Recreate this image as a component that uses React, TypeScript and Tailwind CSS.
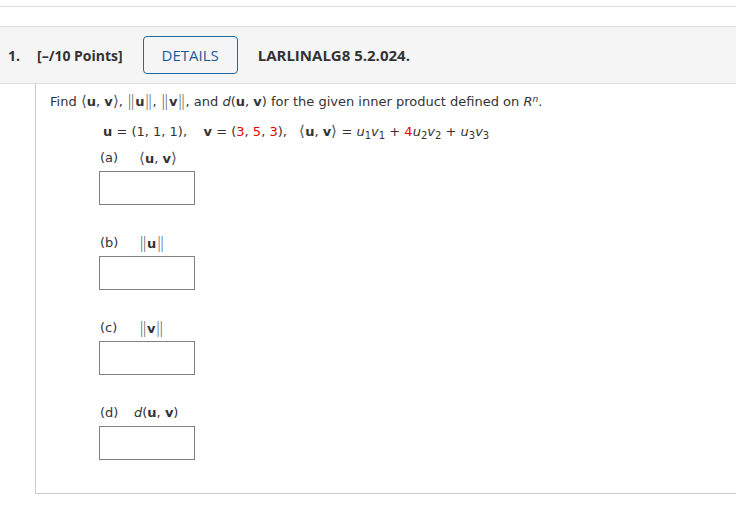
import React from 'react';

// --- Small math helpers ---

function Ang({ children }: { children: React.ReactNode }) {
  return (
    <span className="whitespace-nowrap">
      <span className="text-[15px] font-light text-[#555]">⟨</span>
      {children}
      <span className="text-[15px] font-light text-[#555]">⟩</span>
    </span>
  );
}

function Norm({ children }: { children: React.ReactNode }) {
  return (
    <span className="whitespace-nowrap">
      <span className="text-[15px] tracking-[-2px] font-light text-[#555]">||</span>
      <span className="ml-[2px]">{children}</span>
      <span className="text-[15px] tracking-[-2px] font-light text-[#555] mr-[2px]">||</span>
    </span>
  );
}

const B = ({ children }: { children: React.ReactNode }) => (
  <b className="font-bold text-[#333]">{children}</b>
);

const Red = ({ children }: { children: React.ReactNode }) => (
  <span className="text-[#e60000]">{children}</span>
);

function Sub({ v, n }: { v: string; n: string }) {
  return (
    <span>
      <i>{v}</i>
      <sub className="text-[10px] not-italic relative top-[3px]">{n}</sub>
    </span>
  );
}

function AnswerPart({ label, children }: { label: string; children: React.ReactNode }) {
  return (
    <div className="ml-[49px]">
      <div className="flex items-center h-[20px]">
        <span className="w-[40px] pl-[1px]">({label})</span>
        <span>{children}</span>
      </div>
      <div className="mt-[3px] w-[96px] h-[34px] border border-[#808080] bg-white" />
    </div>
  );
}

// --- Main ---

export default function App() {
  return (
    <div className="min-h-[517px] w-[736px] bg-white overflow-hidden">
      <div className="h-[6px]" />
      <div className="border-t border-[#dedede] h-[20px]" />

      {/* Question header */}
      <div className="h-[58px] bg-[#f5f5f5] border-y border-[#dcdcdc] flex items-center pl-[8px] text-[14px] font-['Open_Sans',sans-serif] text-[#333]">
        <span className="font-bold">1.</span>
        <span className="font-bold ml-[17px]">[–/10 Points]</span>
        <button className="ml-[20px] w-[95px] h-[38px] rounded-[4px] border border-[#1f6aa5] text-[15px] text-[#1a5c94] bg-transparent">
          DETAILS
        </button>
        <span className="font-bold text-[15px] ml-[20px]">LARLINALG8 5.2.024.</span>
      </div>

      {/* Question body */}
      <div className="ml-[35px] border-l border-b border-[#cccccc] pt-[7px] pl-[14px] pb-[33px] text-[13px] leading-[20px] text-[#333] font-['DejaVu_Sans','Verdana',sans-serif]">
        <p>
          Find <Ang><B>u</B>, <B>v</B></Ang>, <Norm><B>u</B></Norm>, <Norm><B>v</B></Norm>, and{' '}
          <i>d</i>(<B>u</B>, <B>v</B>) for the given inner product defined on <i>R</i>
          <sup className="text-[9px] italic">n</sup>.
        </p>

        <p className="mt-[9px] ml-[53px] whitespace-pre">
          <B>u</B> = (1, 1, 1),{'    '}<B>v</B> = (<Red>3</Red>, <Red>5</Red>, <Red>3</Red>),{'   '}
          <Ang><B>u</B>, <B>v</B></Ang> = <Sub v="u" n="1" /><Sub v="v" n="1" /> + <Red>4</Red>
          <Sub v="u" n="2" /><Sub v="v" n="2" /> + <Sub v="u" n="3" /><Sub v="v" n="3" />
        </p>

        <div className="mt-[6px] flex flex-col gap-[28px]">
          <AnswerPart label="a">
            <Ang><B>u</B>, <B>v</B></Ang>
          </AnswerPart>
          <AnswerPart label="b">
            <Norm><B>u</B></Norm>
          </AnswerPart>
          <AnswerPart label="c">
            <Norm><B>v</B></Norm>
          </AnswerPart>
          <AnswerPart label="d">
            <span className="-ml-[5px]">
              <i>d</i>(<B>u</B>, <B>v</B>)
            </span>
          </AnswerPart>
        </div>
      </div>
    </div>
  );
}
